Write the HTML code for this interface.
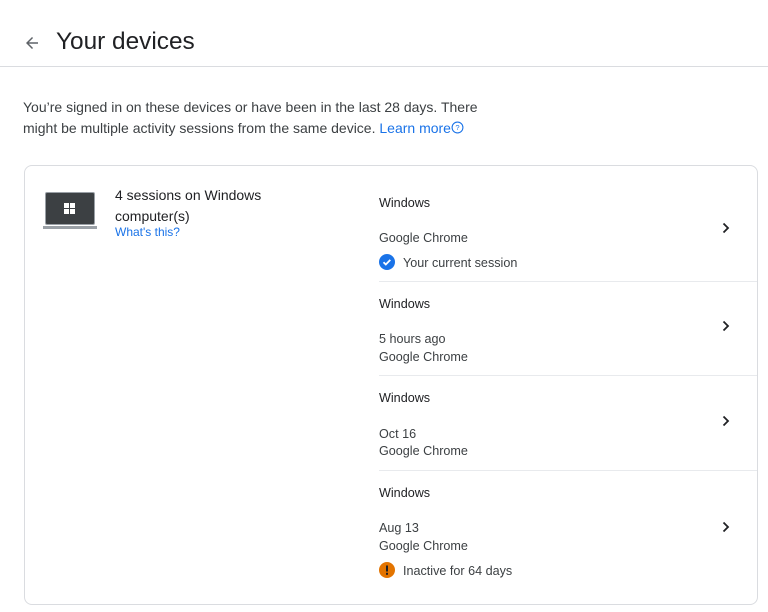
<!DOCTYPE html>
<html><head><style>
body{margin:0;width:768px;height:612px;background:#fff;font-family:"Liberation Sans",Arial,sans-serif;position:relative;overflow:hidden;color:#3c4043}
.a{position:absolute;white-space:nowrap}
.t{font-size:12.6px;color:#3c4043}
.h{font-size:12.6px;color:#202124}
.chev{position:absolute;left:720px;width:12px;height:12px}
.div{position:absolute;left:379px;width:378px;height:1px;background:#e8eaed}
</style></head><body>
<svg class="a" style="left:23px;top:34px" width="18" height="18" viewBox="0 0 24 24"><path d="M20 11H7.8l5.6-5.6L12 4l-8 8 8 8 1.4-1.4L7.8 13H20z" fill="#5f6368"/></svg>
<div class="a" style="left:56px;top:28px;font-size:24.4px;color:#202124">Your devices</div>
<div class="a" style="left:0;top:66px;width:768px;height:1px;background:#dadce0"></div>
<div class="a" style="left:23px;top:97px;font-size:14px;line-height:21px;color:#3c4043">You’re signed in on these devices or have been in the last 28 days. There<br>might be multiple activity sessions from the same device. <span style="color:#1a73e8">Learn more</span><svg width="13" height="13" viewBox="0 0 24 24" style="vertical-align:-1px"><circle cx="12" cy="12" r="10" fill="none" stroke="#1a73e8" stroke-width="2"/><text x="12" y="17" font-size="14" text-anchor="middle" fill="#1a73e8" font-family="Liberation Sans">?</text></svg></div>
<div class="a" style="left:24px;top:165px;width:732px;height:438px;border:1px solid #dadce0;border-radius:8px"></div>
<div class="a" style="left:45px;top:192px;width:48px;height:31px;background:#3c4043;border:1px solid #9aa0a6;border-radius:2px"></div>
<div class="a" style="left:43px;top:226px;width:54px;height:3px;background:#9aa0a6"></div>
<div class="a" style="left:64px;top:203px;width:5px;height:5px;background:#fff;box-shadow:6px 0 #fff,0 6px #fff,6px 6px #fff"></div>
<div class="a" style="left:115px;top:185px;font-size:14px;line-height:21px;color:#202124">4 sessions on Windows<br>computer(s)</div>
<div class="a" style="left:115px;top:225px;font-size:12px;color:#1a73e8">What's this?</div>

<div class="a h" style="left:379px;top:196px">Windows</div>
<div class="a t" style="left:379px;top:231px">Google Chrome</div>
<svg class="a" style="left:379px;top:254px" width="16" height="16" viewBox="0 0 16 16"><circle cx="8" cy="8" r="8" fill="#1a73e8"/><path d="M4.5 8.2l2.3 2.3 4.5-4.6" stroke="#fff" stroke-width="1.8" fill="none"/></svg>
<div class="a t" style="left:403px;top:256px">Your current session</div>
<svg class="chev" style="top:222px" viewBox="0 0 12 12"><path d="M3.5 1.5l4.5 4.5-4.5 4.5" stroke="#202124" stroke-width="1.8" fill="none"/></svg>
<div class="div" style="top:281px"></div>

<div class="a h" style="left:379px;top:297px">Windows</div>
<div class="a t" style="left:379px;top:332px">5 hours ago</div>
<div class="a t" style="left:379px;top:350px">Google Chrome</div>
<svg class="chev" style="top:320px" viewBox="0 0 12 12"><path d="M3.5 1.5l4.5 4.5-4.5 4.5" stroke="#202124" stroke-width="1.8" fill="none"/></svg>
<div class="div" style="top:375px"></div>

<div class="a h" style="left:379px;top:391px">Windows</div>
<div class="a t" style="left:379px;top:427px">Oct 16</div>
<div class="a t" style="left:379px;top:444px">Google Chrome</div>
<svg class="chev" style="top:415px" viewBox="0 0 12 12"><path d="M3.5 1.5l4.5 4.5-4.5 4.5" stroke="#202124" stroke-width="1.8" fill="none"/></svg>
<div class="div" style="top:470px"></div>

<div class="a h" style="left:379px;top:486px">Windows</div>
<div class="a t" style="left:379px;top:521px">Aug 13</div>
<div class="a t" style="left:379px;top:539px">Google Chrome</div>
<svg class="a" style="left:379px;top:562px" width="16" height="16" viewBox="0 0 16 16"><circle cx="8" cy="8" r="8" fill="#e37400"/><rect x="7" y="3.5" width="2" height="6" fill="#202124"/><rect x="7" y="10.8" width="2" height="2" fill="#202124"/></svg>
<div class="a t" style="left:403px;top:564px">Inactive for 64 days</div>
<svg class="chev" style="top:521px" viewBox="0 0 12 12"><path d="M3.5 1.5l4.5 4.5-4.5 4.5" stroke="#202124" stroke-width="1.8" fill="none"/></svg>
</body></html>
